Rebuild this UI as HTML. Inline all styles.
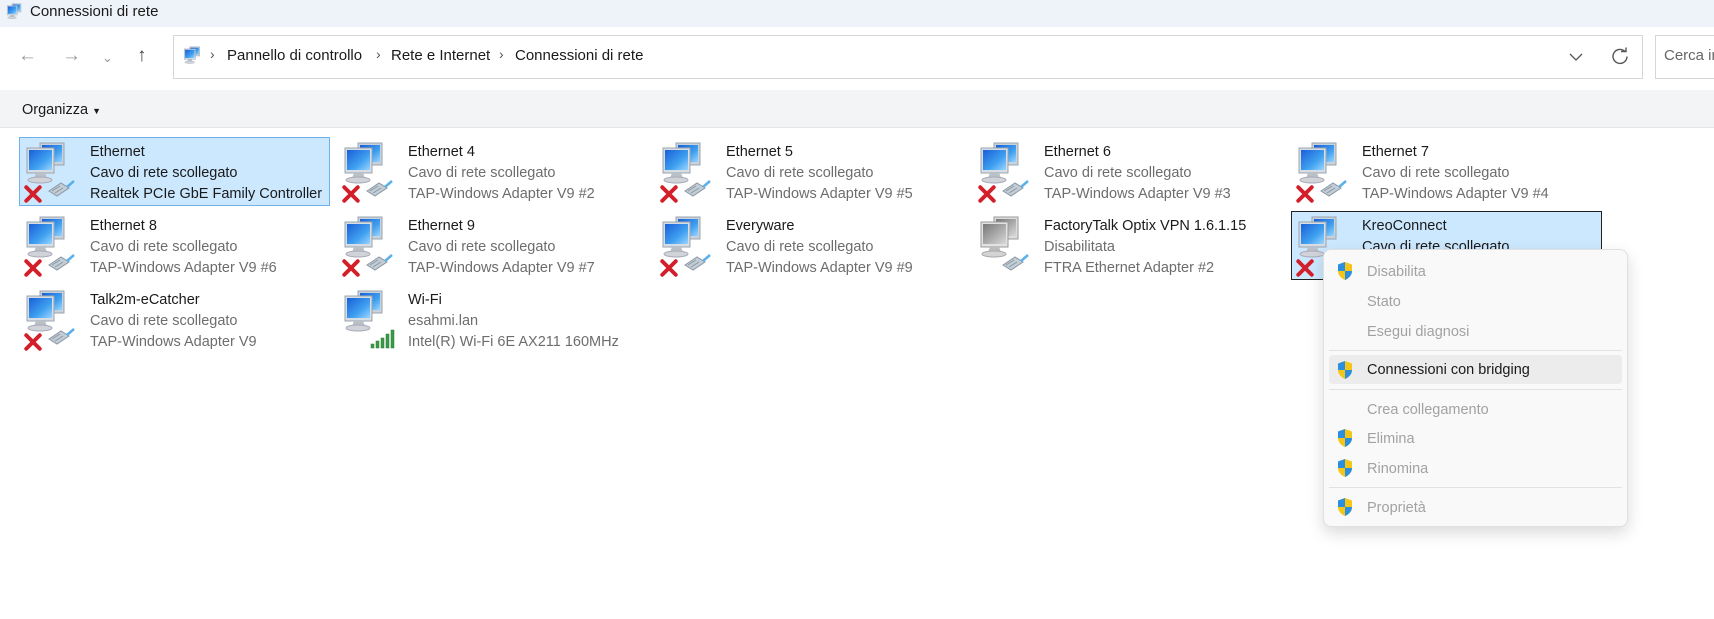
<!DOCTYPE html>
<html><head><meta charset="utf-8">
<style>
*{margin:0;padding:0;box-sizing:border-box}
body{width:1714px;height:619px;overflow:hidden;background:#fff;font-family:"Segoe UI","Liberation Sans",sans-serif;font-size:14.5px;color:#1a1a1a;position:relative}
.abs{position:absolute}
.title{left:0;top:0;width:1714px;height:27px;background:#eef2f9}
.title span{position:absolute;left:30px;top:3px;font-size:15px}
.addr{left:173px;top:35px;width:1470px;height:44px;border:1px solid #d6d6d6;background:#fff}
.search{left:1655px;top:35px;width:70px;height:44px;border:1px solid #d6d6d6}
.search span{position:absolute;left:8px;top:11px;color:#666;font-size:15px}
.tb{left:0;top:90px;width:1714px;height:38px;background:#f3f4f6;border-bottom:1px solid #e5e5e5}
.tb span{position:absolute;left:22px;top:12px;font-size:14.5px}
.crumb{top:47px;font-size:15px;color:#1a1a1a}
.sep{top:46px;font-size:14px;color:#555}
.nav{top:45px;color:#999;font-size:19px}
.item{position:absolute;width:318px;height:70px}
.item .ic{position:absolute;left:5px;top:4px}
.item .t{position:absolute;left:71px;top:5px;line-height:21px;white-space:nowrap}
.item .t div:not(:first-child){color:#6d6d6d}
.sel{position:absolute;background:#cce8ff;border:1px solid #6fb0e8}
.menu{left:1323px;top:249px;width:305px;height:278px;background:#f9f9f9;border:1px solid #e0e0e0;border-radius:8px;box-shadow:0 6px 16px rgba(0,0,0,.15)}
.mi{position:absolute;left:1367px;color:#a2a2a2;font-size:14.5px}
.msep{position:absolute;left:1329px;width:293px;height:1px;background:#e2e2e2}
.sh{position:absolute;left:1336px}
</style></head><body>
<svg width="0" height="0" style="position:absolute">
<defs>
<linearGradient id="scr" x1="0" y1="0" x2="1" y2="1"><stop offset="0" stop-color="#1a5fd8"/><stop offset=".6" stop-color="#3fa0f0"/><stop offset="1" stop-color="#9ad4ff"/></linearGradient>
<linearGradient id="gscr" x1="0" y1="0" x2="1" y2="1"><stop offset="0" stop-color="#777"/><stop offset="1" stop-color="#d8d8d8"/></linearGradient>
<symbol id="mon" viewBox="0 0 48 48">
<rect x="16" y="2" width="24" height="22" fill="#c8d2dc" stroke="#9aa4ae"/>
<rect x="18" y="4" width="20" height="17" fill="url(#scr)"/>
<rect x="3" y="7" width="27" height="25" fill="#d6dde4" stroke="#9aa4ae"/>
<rect x="5" y="9" width="23" height="20" fill="url(#scr)"/>
<path d="M12 32h9l2 5H10z" fill="#b9c0c6"/>
<ellipse cx="16" cy="39" rx="12" ry="3" fill="#d0d4d8" stroke="#aab"/>
</symbol>
<symbol id="gmon" viewBox="0 0 48 48">
<rect x="16" y="2" width="24" height="22" fill="#ddd" stroke="#999"/>
<rect x="18" y="4" width="20" height="17" fill="url(#gscr)"/>
<rect x="3" y="7" width="27" height="25" fill="#e2e2e2" stroke="#999"/>
<rect x="5" y="9" width="23" height="20" fill="url(#gscr)"/>
<path d="M12 32h9l2 5H10z" fill="#bbb"/>
<ellipse cx="16" cy="39" rx="12" ry="3" fill="#d4d4d4" stroke="#aaa"/>
</symbol>
<symbol id="plug" viewBox="0 0 30 20">
<path d="M2 12l12-8 8 5-12 8z" fill="#c3cdd6" stroke="#8a97a3"/>
<path d="M5 12l8-5M8 14l8-5" stroke="#8a97a3"/>
<path d="M20 8l7-6" stroke="#5ab0e8" stroke-width="2.5"/>
</symbol>
<symbol id="x" viewBox="0 0 16 16">
<path d="M2 2L14 14M14 2L2 14" stroke="#d2202a" stroke-width="3.5" stroke-linecap="round"/>
</symbol>
<symbol id="shield" viewBox="0 0 18 20">
<path d="M9 1L2 3.5V10c0 4.5 3.5 7.5 7 9 3.5-1.5 7-4.5 7-9V3.5z" fill="#f5c518"/>
<path d="M9 1L2 3.5V10h7zM9 10h7c0 4.5-3.5 7.5-7 9z" fill="#2a8fe0"/>
</symbol>
</defs></svg>

<div class="abs title"><svg class="abs" style="left:6px;top:3px" width="18" height="18"><use href="#mon"/></svg><span>Connessioni di rete</span></div>

<div class="abs nav" style="left:18px">&#8592;</div>
<div class="abs nav" style="left:62px">&#8594;</div>
<div class="abs nav" style="left:102px;font-size:13px;top:50px">&#8964;</div>
<div class="abs nav" style="left:137px;color:#444">&#8593;</div>
<div class="abs addr"></div>
<svg class="abs" style="left:183px;top:46px" width="20" height="20"><use href="#mon"/></svg>
<div class="abs sep" style="left:210px">&#8250;</div>
<div class="abs crumb" style="left:227px">Pannello di controllo</div>
<div class="abs sep" style="left:376px">&#8250;</div>
<div class="abs crumb" style="left:391px">Rete e Internet</div>
<div class="abs sep" style="left:499px">&#8250;</div>
<div class="abs crumb" style="left:515px">Connessioni di rete</div>
<svg class="abs" style="left:1569px;top:52px" width="14" height="10"><path d="M1 2l6 6 6-6" stroke="#555" fill="none" stroke-width="1.3"/></svg>
<svg class="abs" style="left:1611px;top:47px" width="18" height="18"><path d="M14 4.5A7 7 0 1 0 16 9.5" stroke="#555" fill="none" stroke-width="1.4"/><path d="M10 4.5h5v-4" stroke="#555" fill="none" stroke-width="1.4"/></svg>
<div class="abs search"><span>Cerca in</span></div>

<div class="abs tb"><span>Organizza <span style="position:static;font-size:9px">&#9660;</span></span></div>

<div class="sel" style="left:19px;top:137px;width:311px;height:69px"></div>
<div class="sel" style="left:1291px;top:211px;width:311px;height:69px;border-color:#222"></div>

<!-- row 1 -->
<div class="item" style="left:19px;top:137px"><svg class="ic" width="48" height="48"><use href="#mon"/></svg><svg class="abs" style="left:5px;top:48px" width="18" height="18"><use href="#x"/></svg><svg class="abs" style="left:28px;top:42px" width="30" height="20"><use href="#plug"/></svg><div class="t"><div>Ethernet</div><div style="color:#1a1a1a">Cavo di rete scollegato</div><div style="color:#1a1a1a">Realtek PCIe GbE Family Controller</div></div></div>
<div class="item" style="left:337px;top:137px"><svg class="ic" width="48" height="48"><use href="#mon"/></svg><svg class="abs" style="left:5px;top:48px" width="18" height="18"><use href="#x"/></svg><svg class="abs" style="left:28px;top:42px" width="30" height="20"><use href="#plug"/></svg><div class="t"><div>Ethernet 4</div><div>Cavo di rete scollegato</div><div>TAP-Windows Adapter V9 #2</div></div></div>
<div class="item" style="left:655px;top:137px"><svg class="ic" width="48" height="48"><use href="#mon"/></svg><svg class="abs" style="left:5px;top:48px" width="18" height="18"><use href="#x"/></svg><svg class="abs" style="left:28px;top:42px" width="30" height="20"><use href="#plug"/></svg><div class="t"><div>Ethernet 5</div><div>Cavo di rete scollegato</div><div>TAP-Windows Adapter V9 #5</div></div></div>
<div class="item" style="left:973px;top:137px"><svg class="ic" width="48" height="48"><use href="#mon"/></svg><svg class="abs" style="left:5px;top:48px" width="18" height="18"><use href="#x"/></svg><svg class="abs" style="left:28px;top:42px" width="30" height="20"><use href="#plug"/></svg><div class="t"><div>Ethernet 6</div><div>Cavo di rete scollegato</div><div>TAP-Windows Adapter V9 #3</div></div></div>
<div class="item" style="left:1291px;top:137px"><svg class="ic" width="48" height="48"><use href="#mon"/></svg><svg class="abs" style="left:5px;top:48px" width="18" height="18"><use href="#x"/></svg><svg class="abs" style="left:28px;top:42px" width="30" height="20"><use href="#plug"/></svg><div class="t"><div>Ethernet 7</div><div>Cavo di rete scollegato</div><div>TAP-Windows Adapter V9 #4</div></div></div>
<!-- row 2 -->
<div class="item" style="left:19px;top:211px"><svg class="ic" width="48" height="48"><use href="#mon"/></svg><svg class="abs" style="left:5px;top:48px" width="18" height="18"><use href="#x"/></svg><svg class="abs" style="left:28px;top:42px" width="30" height="20"><use href="#plug"/></svg><div class="t"><div>Ethernet 8</div><div>Cavo di rete scollegato</div><div>TAP-Windows Adapter V9 #6</div></div></div>
<div class="item" style="left:337px;top:211px"><svg class="ic" width="48" height="48"><use href="#mon"/></svg><svg class="abs" style="left:5px;top:48px" width="18" height="18"><use href="#x"/></svg><svg class="abs" style="left:28px;top:42px" width="30" height="20"><use href="#plug"/></svg><div class="t"><div>Ethernet 9</div><div>Cavo di rete scollegato</div><div>TAP-Windows Adapter V9 #7</div></div></div>
<div class="item" style="left:655px;top:211px"><svg class="ic" width="48" height="48"><use href="#mon"/></svg><svg class="abs" style="left:5px;top:48px" width="18" height="18"><use href="#x"/></svg><svg class="abs" style="left:28px;top:42px" width="30" height="20"><use href="#plug"/></svg><div class="t"><div>Everyware</div><div>Cavo di rete scollegato</div><div>TAP-Windows Adapter V9 #9</div></div></div>
<div class="item" style="left:973px;top:211px"><svg class="ic" width="48" height="48"><use href="#gmon"/></svg><svg class="abs" style="left:28px;top:42px" width="30" height="20"><use href="#plug"/></svg><div class="t"><div>FactoryTalk Optix VPN 1.6.1.15</div><div>Disabilitata</div><div>FTRA Ethernet Adapter #2</div></div></div>
<div class="item" style="left:1291px;top:211px"><svg class="ic" width="48" height="48"><use href="#mon"/></svg><svg class="abs" style="left:5px;top:48px" width="18" height="18"><use href="#x"/></svg><div class="t"><div>KreoConnect</div><div style="color:#1a1a1a">Cavo di rete scollegato</div></div></div>
<!-- row 3 -->
<div class="item" style="left:19px;top:285px"><svg class="ic" width="48" height="48"><use href="#mon"/></svg><svg class="abs" style="left:5px;top:48px" width="18" height="18"><use href="#x"/></svg><svg class="abs" style="left:28px;top:42px" width="30" height="20"><use href="#plug"/></svg><div class="t"><div>Talk2m-eCatcher</div><div>Cavo di rete scollegato</div><div>TAP-Windows Adapter V9</div></div></div>
<div class="item" style="left:337px;top:285px"><svg class="ic" width="48" height="48"><use href="#mon"/></svg><svg class="abs" style="left:33px;top:44px" width="26" height="20"><g fill="#3a9a48" stroke="#2a7a36" stroke-width=".5"><rect x="1" y="15" width="3" height="4"/><rect x="6" y="12" width="3" height="7"/><rect x="11" y="9" width="3" height="10"/><rect x="16" y="5" width="3" height="14"/><rect x="21" y="1" width="3" height="18"/></g></svg><div class="t"><div>Wi-Fi</div><div>esahmi.lan</div><div>Intel(R) Wi-Fi 6E AX211 160MHz</div></div></div>

<!-- context menu -->
<div class="abs menu"></div>
<div class="abs" style="left:1329px;top:355px;width:293px;height:29px;background:#ececec;border-radius:4px"></div>
<svg class="sh" style="top:261px" width="18" height="20"><use href="#shield"/></svg>
<div class="mi" style="top:264px">Disabilita</div>
<div class="mi" style="top:294px">Stato</div>
<div class="mi" style="top:324px">Esegui diagnosi</div>
<div class="msep" style="top:350px"></div>
<svg class="sh" style="top:360px" width="18" height="20"><use href="#shield"/></svg>
<div class="mi" style="top:362px;color:#1a1a1a">Connessioni con bridging</div>
<div class="msep" style="top:389px"></div>
<div class="mi" style="top:402px">Crea collegamento</div>
<svg class="sh" style="top:428px" width="18" height="20"><use href="#shield"/></svg>
<div class="mi" style="top:431px">Elimina</div>
<svg class="sh" style="top:458px" width="18" height="20"><use href="#shield"/></svg>
<div class="mi" style="top:461px">Rinomina</div>
<div class="msep" style="top:487px"></div>
<svg class="sh" style="top:497px" width="18" height="20"><use href="#shield"/></svg>
<div class="mi" style="top:500px">Proprietà</div>
</body></html>
